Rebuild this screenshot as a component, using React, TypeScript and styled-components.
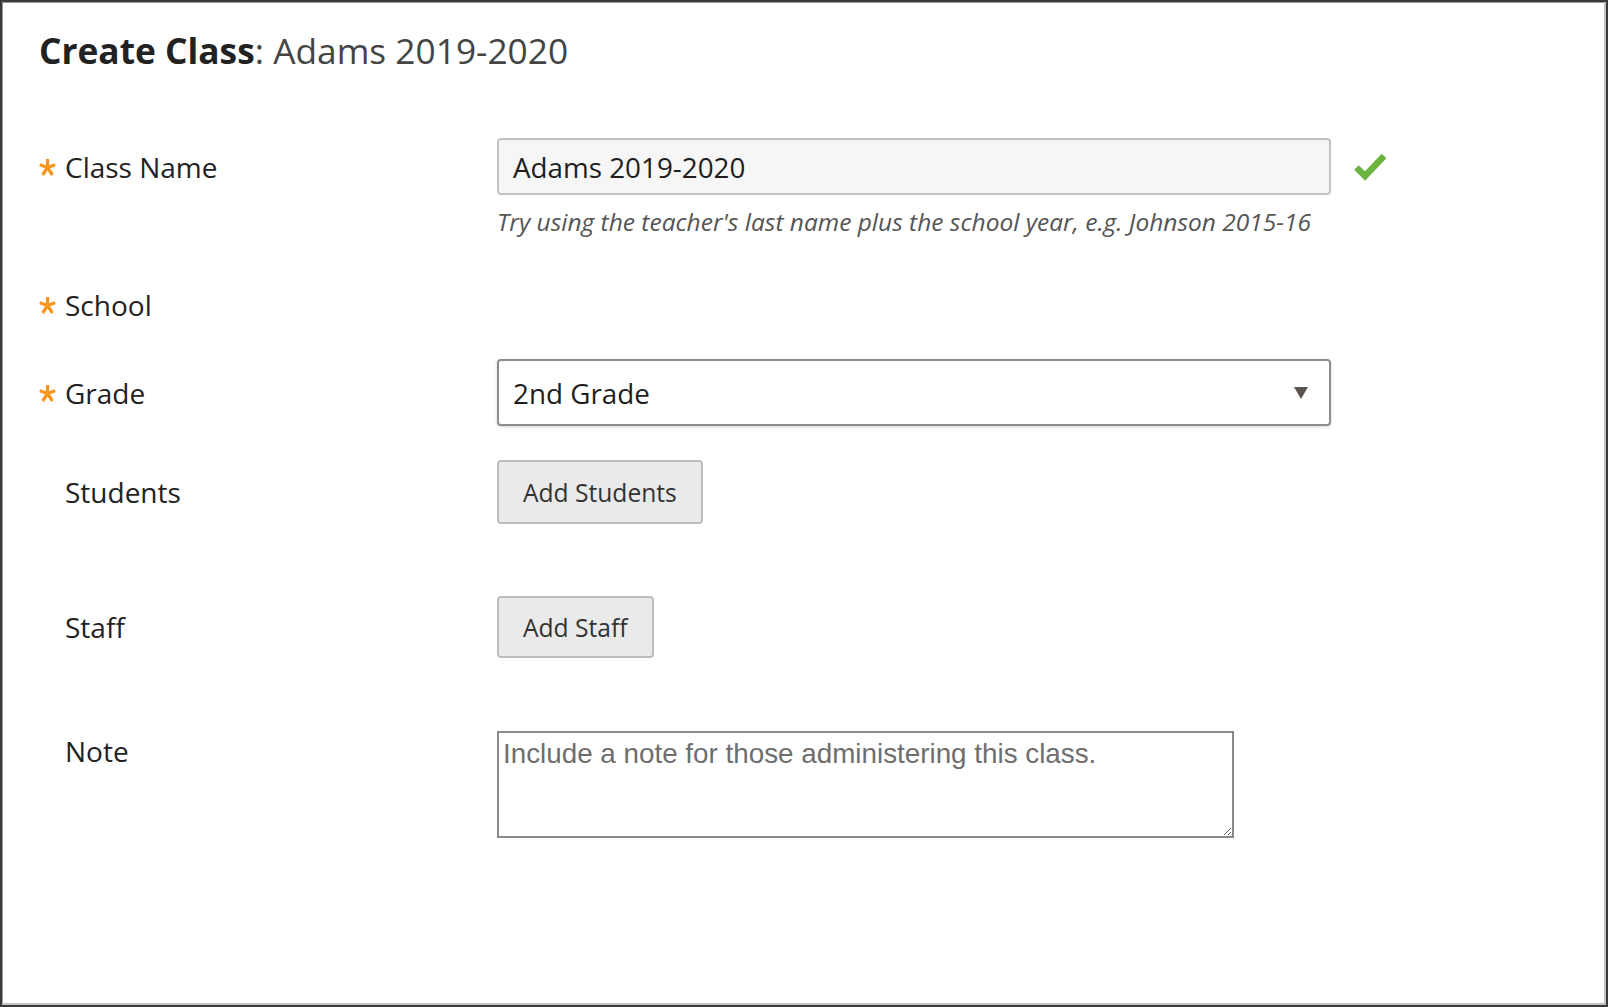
import React from 'react';
import styled, { createGlobalStyle } from 'styled-components';

const GlobalStyle = createGlobalStyle`
  html, body {
    margin: 0;
    padding: 0;
    background: #ffffff;
  }
  * {
    box-sizing: border-box;
  }
`;

const Frame = styled.div`
  min-height: 100vh;
  border: 2px solid #3a3a3a;
  box-shadow: inset -2px -2px 0 #c2c2c2, inset 1px 1px 0 #9a9a9a;
  background: #fff;
  padding: 24px 0 0 37px;
  font-family: 'Open Sans', 'Liberation Sans', sans-serif;
  color: #222;
`;

const Title = styled.h1`
  margin: 0;
  font-size: 35.3px;
  line-height: 48px;
  font-weight: 400;
  color: #444;
  b {
    font-weight: 700;
    color: #222;
  }
`;

const Form = styled.div`
  display: flex;
  flex-direction: column;
`;

const Row = styled.div<{ $gap: number }>`
  display: flex;
  align-items: flex-start;
  margin-top: ${(p) => p.$gap}px;
`;

const Label = styled.div<{ $h: number }>`
  width: 458px;
  flex: none;
  display: flex;
  align-items: center;
  height: ${(p) => p.$h}px;
  font-size: 28px;
  color: #222;
`;

const Req = styled.span`
  width: 26px;
  flex: none;
  display: flex;
  align-items: center;
`;

const Control = styled.div`
  display: flex;
  flex-direction: column;
`;

const InputLine = styled.div`
  display: flex;
  align-items: center;
`;

const TextInput = styled.div`
  width: 834px;
  height: 57px;
  display: flex;
  align-items: center;
  padding: 0 14px;
  background: #f6f6f6;
  border: 2px solid #c2c2c2;
  border-radius: 4px;
  font-size: 27.8px;
  color: #1e1e1e;
`;

const Check = styled.svg`
  margin-left: 23px;
  flex: none;
`;

const Hint = styled.div`
  margin-top: 12px;
  font-size: 24.5px;
  line-height: 30px;
  font-style: italic;
  color: #555;
`;

const SelectBox = styled.div`
  width: 834px;
  height: 67px;
  display: flex;
  align-items: center;
  justify-content: space-between;
  padding: 0 21px 0 14px;
  background: #fff;
  border: 2px solid #8e8e8e;
  border-radius: 4px;
  box-shadow: 0 1px 3px rgba(0, 0, 0, 0.18);
  font-size: 27.8px;
  color: #1e1e1e;
`;

const Button = styled.button<{ $h: number }>`
  height: ${(p) => p.$h}px;
  padding: 0 24px;
  background: #eaeaea;
  border: 2px solid #bdbdbd;
  border-radius: 4px;
  font-family: 'Open Sans', 'Liberation Sans', sans-serif;
  font-size: 24.6px;
  color: #333;
  cursor: pointer;
`;

const NoteArea = styled.textarea`
  width: 737px;
  height: 107px;
  margin: 0;
  padding: 5px 4px 3px;
  border: 2px solid #8a8a8a;
  border-radius: 0;
  font-family: 'Liberation Sans', Arial, sans-serif;
  font-size: 27.8px;
  line-height: 32px;
  color: #222;
  resize: both;
  outline: none;
  &::placeholder {
    color: #6e6e6e;
  }
`;

const Asterisk = () => (
  <svg width="17" height="18" viewBox="0 0 17 18">
    <g stroke="#f7941d" strokeWidth="3.2" strokeLinecap="butt">
      <line x1="8.5" y1="9.5" x2="8.5" y2="1" />
      <line x1="8.5" y1="9.5" x2="0.8" y2="6.8" />
      <line x1="8.5" y1="9.5" x2="16.2" y2="6.8" />
      <line x1="8.5" y1="9.5" x2="3.6" y2="17" />
      <line x1="8.5" y1="9.5" x2="13.4" y2="17" />
    </g>
  </svg>
);

const FieldLabel = ({ text, h, required }: { text: string; h: number; required?: boolean }) => (
  <Label $h={h}>
    <Req>{required && <Asterisk />}</Req>
    {text}
  </Label>
);

const App = () => {
  return (
    <Frame>
      <GlobalStyle />
      <Title>
        <b>Create Class</b>: Adams 2019-2020
      </Title>
      <Form>
        <Row $gap={64}>
          <FieldLabel text="Class Name" h={57} required />
          <Control>
            <InputLine>
              <TextInput>Adams 2019-2020</TextInput>
              <Check width="33" height="30" viewBox="0 0 33 30">
                <polyline points="2.5,15.5 11,24 30,4" fill="none" stroke="#6db33f" strokeWidth="6.5" />
              </Check>
            </InputLine>
            <Hint>Try using the teacher's last name plus the school year, e.g. Johnson 2015-16</Hint>
          </Control>
        </Row>
        <Row $gap={48}>
          <FieldLabel text="School" h={40} required />
        </Row>
        <Row $gap={34}>
          <FieldLabel text="Grade" h={67} required />
          <SelectBox>
            2nd Grade
            <svg width="14" height="12" viewBox="0 0 14 12">
              <polygon points="0,0 14,0 7,12" fill="#5a5350" />
            </svg>
          </SelectBox>
        </Row>
        <Row $gap={34}>
          <FieldLabel text="Students" h={64} />
          <Button type="button" $h={64}>Add Students</Button>
        </Row>
        <Row $gap={72}>
          <FieldLabel text="Staff" h={62} />
          <Button type="button" $h={62}>Add Staff</Button>
        </Row>
        <Row $gap={73}>
          <FieldLabel text="Note" h={40} />
          <NoteArea placeholder="Include a note for those administering this class." />
        </Row>
      </Form>
    </Frame>
  );
};

export default App;
